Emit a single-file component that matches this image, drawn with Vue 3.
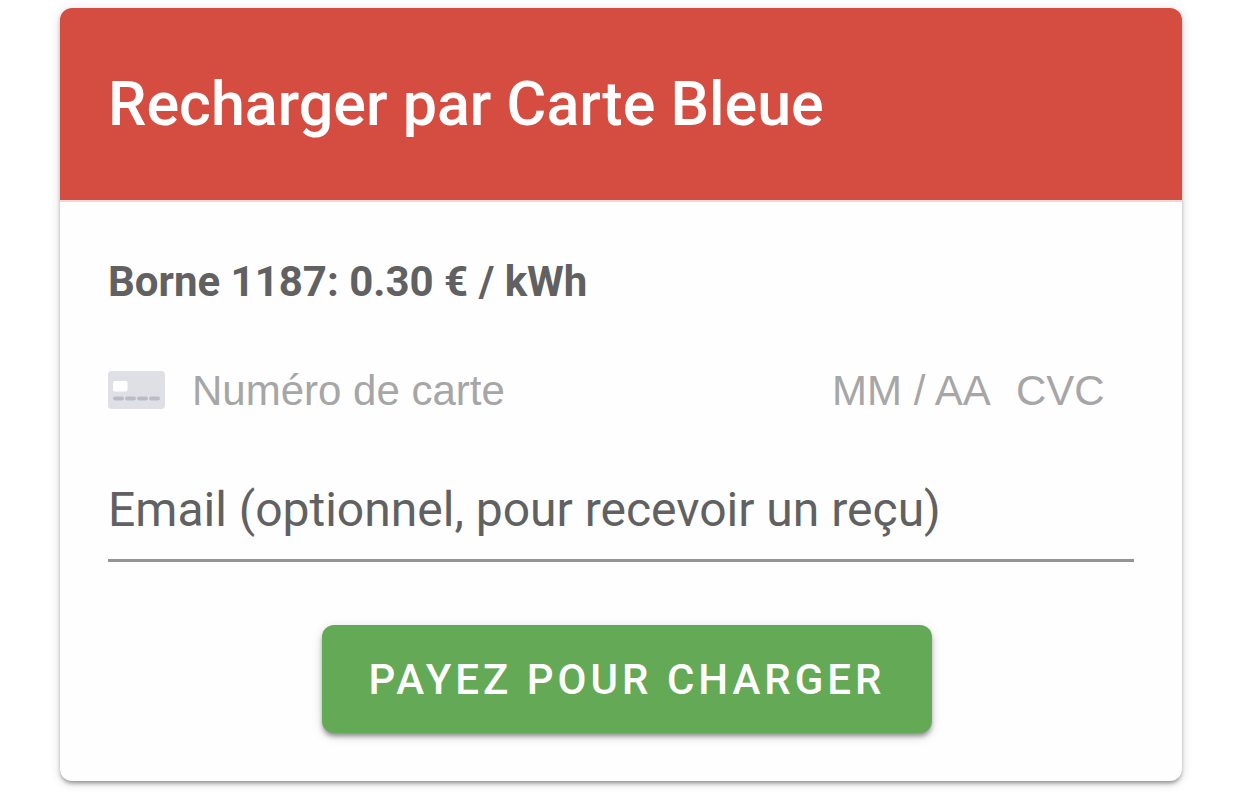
<script setup>
import { ref } from 'vue'

const cardNumber = ref('')
const expiry = ref('')
const cvc = ref('')
const email = ref('')
</script>

<template>
  <main class="page">
    <form class="card" @submit.prevent>
      <header class="header">
        <h1>Recharger par Carte Bleue</h1>
      </header>
      <div class="body">
        <p class="tariff">Borne 1187: 0.30 € / kWh</p>
        <div class="payment">
          <svg class="card-icon" viewBox="0 0 57 38" aria-hidden="true">
            <rect width="57" height="38" rx="4" fill="#dee0e6" />
            <rect x="5" y="10" width="14.5" height="10.5" rx="2" fill="#fff" />
            <path d="M7 27.5h7M19 27.5h7M31 27.5h7M43 27.5h7" stroke="#babdc6" stroke-width="4" stroke-linecap="round" />
          </svg>
          <input v-model="cardNumber" class="number" aria-label="Numéro de carte" placeholder="Numéro de carte" />
          <input v-model="expiry" class="expiry" aria-label="Date d’expiration" placeholder="MM / AA" />
          <input v-model="cvc" class="cvc" aria-label="CVC" placeholder="CVC" />
        </div>
        <input v-model="email" class="email" type="email" aria-label="Email" placeholder="Email (optionnel, pour recevoir un reçu)" />
        <button class="pay" type="submit">PAYEZ POUR CHARGER</button>
      </div>
    </form>
  </main>
</template>

<style>
body {
  background: #fff;
}
</style>

<style scoped>
.page {
  padding: 8px 60px 12px;
  font-family: Roboto, sans-serif;
}

.card {
  border-radius: 12px;
  background: #fefefe;
  box-shadow: 0 3px 4px -1px rgba(0, 0, 0, 0.4), 0 2px 12px rgba(0, 0, 0, 0.14);
}

.header {
  padding: 60px 48px;
  border-bottom: 2px solid #ecd9d7;
  border-radius: 12px 12px 0 0;
  background: #d54c40;
}

h1 {
  margin: 0;
  color: #fff;
  font-size: 61px;
  font-weight: 500;
  line-height: 72px;
}

.body {
  display: flex;
  flex-direction: column;
  padding: 48px;
}

.tariff {
  margin: 0;
  color: #616161;
  font-size: 42px;
  font-weight: 700;
  line-height: 64px;
}

.payment {
  display: flex;
  align-items: center;
  margin-top: 48px;
  padding-right: 28px;
  font-family: "Liberation Sans", sans-serif;
}

.card-icon {
  flex: none;
  width: 57px;
  height: 38px;
  margin-right: 27px;
}

input {
  box-sizing: border-box;
  min-width: 0;
  padding: 0;
  border: 0;
  outline: 0;
  background: transparent;
  color: #616161;
  font-family: inherit;
}

.payment input {
  height: 56px;
  padding-top: 2px;
  font-size: 42px;
}

.payment input::placeholder {
  color: #a6a6a6;
  opacity: 1;
}

.number {
  flex: 1;
}

.expiry {
  width: 184px;
}

.cvc {
  width: 90px;
}

.email {
  width: 100%;
  height: 84px;
  margin-top: 60px;
  padding-bottom: 18px;
  border-bottom: 3px solid #949494;
  font-size: 48px;
}

.email::placeholder {
  color: #616161;
  opacity: 1;
}

.pay {
  align-self: center;
  height: 108px;
  margin: 63px 0 0 12px;
  padding: 0 46px;
  border: 0;
  border-radius: 12px;
  background: #64a956;
  box-shadow: 0 4px 5px -1px rgba(0, 0, 0, 0.4), 0 3px 12px rgba(0, 0, 0, 0.14);
  color: #fff;
  font-family: inherit;
  font-size: 42px;
  font-weight: 500;
  letter-spacing: 4px;
}
</style>
